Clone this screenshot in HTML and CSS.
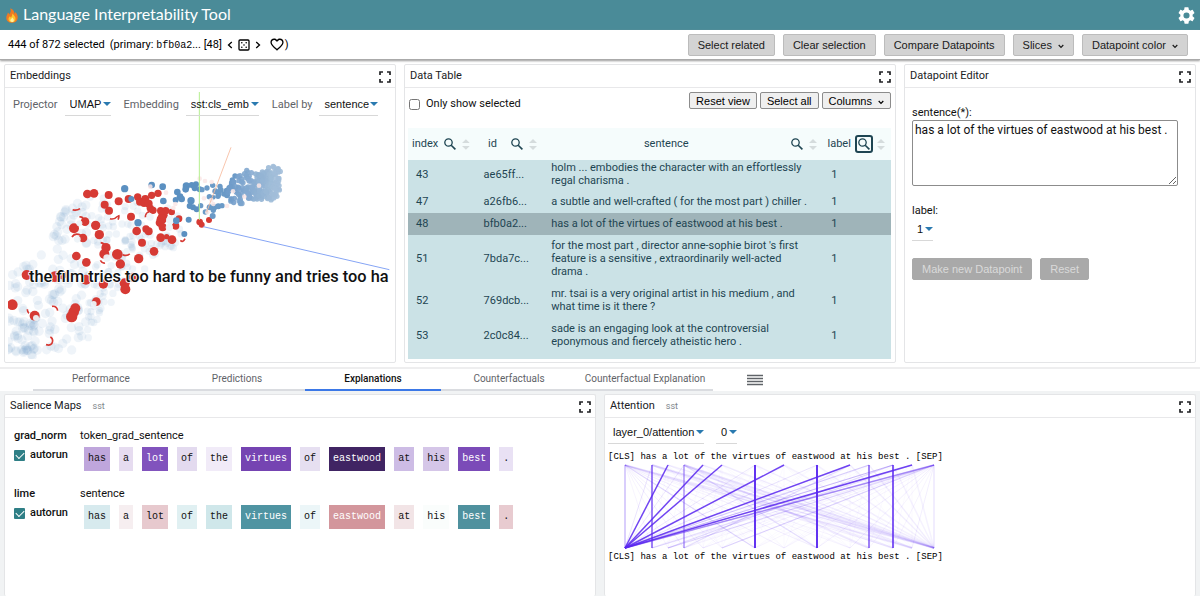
FILE: index.html
```html
<!DOCTYPE html>
<html lang="en">
<head>
<meta charset="utf-8">
<title>Language Interpretability Tool</title>
<link rel="stylesheet" href="styles.css">
</head>
<body>
<svg class="defs" aria-hidden="true">
  <symbol id="i-full" viewBox="0 0 12 12"><path d="M1 4V1h3M8 1h3v3M11 8v3H8M4 11H1V8" fill="none" stroke="currentColor" stroke-width="1.700"/></symbol>
  <symbol id="i-search" viewBox="0 0 12 12"><circle cx="4.500" cy="4.500" r="3.700" fill="none" stroke="currentColor" stroke-width="1.300"/><path d="M7.200 7.200 11.400 11.400" stroke="currentColor" stroke-width="1.600"/></symbol>
  <symbol id="i-sort" viewBox="0 0 8 12"><path d="M0 5 4 1l4 4zM0 8h8l-4 4z" fill="currentColor"/></symbol>
  <symbol id="i-down" viewBox="0 0 6 5"><path d="M.7 1 3 3.400 5.300 1" fill="none" stroke="currentColor" stroke-width="1.200"/></symbol>
</svg>

<header class="topbar">
  <svg class="flame" viewBox="0 0 12 15"><path d="M4.200.3C7.500 1.500 8.500 4 8.400 5.800 9 5.400 9.300 4.800 9.300 4.100 11 5.800 12 8 11.700 10.200 11.300 13.100 9 14.800 6 14.800S.5 13 .3 10.200C.1 7.800 1.500 6.600 1.900 4.600c.7.500 1.100 1.100 1.300 1.800C4.800 4.800 5.200 2.500 4.200.3z" fill="#ef7a22"/><path d="M6.200 5.500C8.600 7.500 9.700 9.300 9.500 11.200 9.300 13.200 7.800 14.200 6 14.200S2.500 13.100 2.500 11.200c0-1.300.8-2 1.300-2.900.5.400.7.800.9 1.300C5.900 8.500 6.500 7 6.200 5.500z" fill="#fdc62f"/><path d="M6.200 9.500c1.300 1.200 1.700 2 1.600 2.900-.1 1-.8 1.500-1.700 1.500s-1.800-.6-1.800-1.600c0-1.100 1.600-1.500 1.900-2.800z" fill="#fff0a0"/></svg>
  <h1>Language Interpretability Tool</h1>
  <button class="icon gear" aria-label="Settings"><svg viewBox="2 2 20 20"><path fill="currentColor" d="M19.140 12.940c.040-.3.060-.61.060-.940 0-.320-.020-.640-.070-.940l2.030-1.580a.49.49 0 0 0 .120-.610l-1.920-3.320a.488.488 0 0 0-.590-.220l-2.390.960c-.5-.380-1.030-.7-1.620-.940l-.360-2.540a.484.484 0 0 0-.480-.410h-3.840c-.240 0-.430.170-.470.410l-.360 2.540c-.590.240-1.130.570-1.620.940l-2.390-.960c-.220-.080-.470 0-.590.220L2.740 8.870c-.120.210-.080.470.120.610l2.030 1.580c-.050.3-.090.630-.090.940s.020.640.070.940l-2.030 1.580a.49.49 0 0 0-.120.610l1.920 3.320c.120.220.370.290.590.220l2.390-.960c.5.380 1.030.7 1.620.940l.360 2.540c.050.240.240.410.480.410h3.840c.240 0 .440-.170.470-.410l.360-2.540c.590-.240 1.130-.560 1.620-.940l2.390.960c.220.080.470 0 .590-.220l1.920-3.320c.120-.220.070-.470-.120-.610l-2.010-1.580zM12 15.600A3.600 3.600 0 1 1 12 8.400a3.600 3.600 0 0 1 0 7.200z"/></svg></button>
</header>

<div class="toolbar">
  <div class="selection">
    <span>444 of 872 selected</span>
    <span class="primary">(primary: <code>bfb0a2</code>... [48]</span>
    <button class="icon" aria-label="Previous"><svg class="chev" viewBox="0 0 6 8"><path d="M4.800 1 1.500 4l3.300 3" fill="none" stroke="currentColor" stroke-width="1.300"/></svg></button>
    <button class="icon" aria-label="Random"><svg class="dice" viewBox="0 0 12 12"><rect x="1" y="1" width="10" height="10" rx="1" fill="none" stroke="currentColor" stroke-width="1.300"/><g fill="currentColor"><circle cx="3.800" cy="3.800" r=".8"/><circle cx="8.200" cy="3.800" r=".8"/><circle cx="6" cy="6" r=".8"/><circle cx="3.800" cy="8.200" r=".8"/><circle cx="8.200" cy="8.200" r=".8"/></g></svg></button>
    <button class="icon" aria-label="Next"><svg class="chev" viewBox="0 0 6 8"><path d="M1.200 1 4.500 4 1.200 7" fill="none" stroke="currentColor" stroke-width="1.300"/></svg></button>
    <span class="fav"><button class="icon" aria-label="Favorite"><svg class="heart" viewBox="1.400 2.400 21.200 19.200"><path fill="currentColor" d="M16.500 3c-1.740 0-3.410.81-4.500 2.090C10.910 3.810 9.240 3 7.500 3 4.420 3 2 5.420 2 8.500c0 3.780 3.400 6.860 8.550 11.540L12 21.350l1.450-1.320C18.600 15.360 22 12.280 22 8.500 22 5.420 19.580 3 16.500 3zm-4.400 15.550-.1.100-.1-.100C7.140 14.240 4 11.390 4 8.500 4 6.500 5.500 5 7.500 5c1.540 0 3.040.99 3.570 2.360h1.870C13.460 5.990 14.960 5 16.500 5c2 0 3.500 1.500 3.500 3.500 0 2.890-3.140 5.740-7.900 10.050z"/></svg></button>)</span>
  </div>
  <div class="actions">
    <button class="btn">Select related</button>
    <button class="btn">Clear selection</button>
    <button class="btn">Compare Datapoints</button>
    <button class="btn">Slices <svg><use href="#i-down"/></svg></button>
    <button class="btn">Datapoint color <svg><use href="#i-down"/></svg></button>
  </div>
</div>

<main class="upper">
  <section class="panel embeddings">
    <div class="panel-head"><h2>Embeddings</h2><button class="icon full" aria-label="Expand"><svg><use href="#i-full"/></svg></button></div>
    <div class="panel-body">
      <svg class="plot" id="plot" viewBox="24 -84 1149 801" preserveAspectRatio="xMinYMin meet" role="img" aria-label="Embedding projection"></svg>
      <div class="controls">
        <div class="field"><label for="proj">Projector</label><span class="sel"><select id="proj"><option>UMAP</option></select></span></div>
        <div class="field"><label for="emb">Embedding</label><span class="sel"><select id="emb"><option>sst:cls_emb</option></select></span></div>
        <div class="field"><label for="lab">Label by</label><span class="sel"><select id="lab"><option>sentence</option></select></span></div>
      </div>
    </div>
  </section>

  <section class="panel data">
    <div class="panel-head"><h2>Data Table</h2><button class="icon full" aria-label="Expand"><svg><use href="#i-full"/></svg></button></div>
    <div class="panel-body">
      <div class="table-bar">
        <label class="only"><input type="checkbox"> Only show selected</label>
        <div class="table-actions">
          <button class="small">Reset view</button>
          <button class="small">Select all</button>
          <button class="small">Columns <svg><use href="#i-down"/></svg></button>
        </div>
      </div>
      <div class="table-wrap">
        <table>
          <colgroup><col class="c-short"><col class="c-short"><col class="c-long"><col class="c-short"></colgroup>
          <thead><tr>
            <th><div class="th"><span>index</span><button class="icon" aria-label="Search index"><svg><use href="#i-search"/></svg></button><svg class="sort"><use href="#i-sort"/></svg></div></th>
            <th><div class="th"><span>id</span><button class="icon" aria-label="Search id"><svg><use href="#i-search"/></svg></button><svg class="sort"><use href="#i-sort"/></svg></div></th>
            <th><div class="th"><span>sentence</span><button class="icon" aria-label="Search sentence"><svg><use href="#i-search"/></svg></button><svg class="sort"><use href="#i-sort"/></svg></div></th>
            <th><div class="th"><span>label</span><button class="icon focused" aria-label="Search label"><svg><use href="#i-search"/></svg></button><svg class="sort"><use href="#i-sort"/></svg></div></th>
          </tr></thead>
          <tbody>
            <tr class="cut"><td>43</td><td>ae65ff...</td><td>holm ... embodies the character with an effortlessly regal charisma .</td><td>1</td></tr>
            <tr><td>47</td><td>a26fb6...</td><td>a subtle and well-crafted ( for the most part ) chiller .</td><td>1</td></tr>
            <tr class="picked"><td>48</td><td>bfb0a2...</td><td>has a lot of the virtues of eastwood at his best .</td><td>1</td></tr>
            <tr><td>51</td><td>7bda7c...</td><td>for the most part , director anne-sophie birot 's first feature is a sensitive , extraordinarily well-acted drama .</td><td>1</td></tr>
            <tr><td>52</td><td>769dcb...</td><td>mr. tsai is a very original artist in his medium , and what time is it there ?</td><td>1</td></tr>
            <tr><td>53</td><td>2c0c84...</td><td>sade is an engaging look at the controversial eponymous and fiercely atheistic hero .</td><td>1</td></tr>
          </tbody>
        </table>
      </div>
    </div>
  </section>

  <section class="panel editor">
    <div class="panel-head"><h2>Datapoint Editor</h2><button class="icon full" aria-label="Expand"><svg><use href="#i-full"/></svg></button></div>
    <div class="panel-body">
      <label for="sent">sentence(*):</label>
      <textarea id="sent">has a lot of the virtues of eastwood at his best .</textarea>
      <label for="lbl">label:</label>
      <span class="sel"><select id="lbl"><option>1</option></select></span>
      <div class="editor-actions"><button class="btn" disabled>Make new Datapoint</button><button class="btn" disabled>Reset</button></div>
    </div>
  </section>
</main>

<nav class="tabs">
  <div class="tablist" role="tablist">
    <button role="tab">Performance</button>
    <button role="tab">Predictions</button>
    <button role="tab" aria-selected="true">Explanations</button>
    <button role="tab">Counterfactuals</button>
    <button role="tab">Counterfactual Explanation</button>
  </div>
  <button class="icon menu" aria-label="Menu"><svg viewBox="0 0 16 12"><path d="M0 1.500h16M0 4.500h16M0 7.500h16M0 10.500h16" stroke="currentColor" stroke-width="1.300"/></svg></button>
</nav>

<main class="lower">
  <section class="panel salience">
    <div class="panel-head"><h2>Salience Maps</h2><small>sst</small><button class="icon full" aria-label="Expand"><svg><use href="#i-full"/></svg></button></div>
    <div class="panel-body">
      <div class="method">
        <div class="method-side"><strong>grad_norm</strong><label><input type="checkbox" class="tick" checked> autorun</label></div>
        <div class="method-main"><div>token_grad_sentence</div><div class="tokens" id="grad"></div></div>
      </div>
      <div class="method">
        <div class="method-side"><strong>lime</strong><label><input type="checkbox" class="tick" checked> autorun</label></div>
        <div class="method-main"><div>sentence</div><div class="tokens" id="lime"></div></div>
      </div>
    </div>
  </section>
  <section class="panel attention">
    <div class="panel-head"><h2>Attention</h2><small>sst</small><button class="icon full" aria-label="Expand"><svg><use href="#i-full"/></svg></button></div>
    <div class="panel-body">
      <div class="controls">
        <span class="sel"><select aria-label="Attention layer"><option>layer_0/attention</option></select></span>
        <span class="sel"><select aria-label="Attention head"><option>0</option></select></span>
      </div>
      <div class="att-text">[CLS] has a lot of the virtues of eastwood at his best . [SEP]</div>
      <svg class="att" id="att" viewBox="0 0 336 86"></svg>
      <div class="att-text">[CLS] has a lot of the virtues of eastwood at his best . [SEP]</div>
    </div>
  </section>
</main>
<script src="app.js"></script>
</body>
</html>
```
FILE: styles.css
```css
* { box-sizing: border-box; }
body { margin: 0; min-height: 100vh; display: flex; flex-direction: column; font: 11px/14px Roboto, sans-serif; color: #202124; background: #fff; }
h1, h2 { margin: 0; font-weight: 400; }
button, select, input, textarea { font: inherit; color: inherit; margin: 0; }
.defs { display: none; }
.icon { border: 0; padding: 0; background: none; display: inline-flex; align-items: center; justify-content: center; }

.topbar { display: flex; align-items: center; height: 30px; padding: 0 5px 0 6px; gap: 5px; background: #4a8b98; color: #fff; }
.topbar h1 { flex: 1; font: 16px/18px Lato, sans-serif; padding-bottom: 2px; }
.flame { width: 12px; height: 15px; }
.gear svg { width: 17px; height: 17px; }

.toolbar { display: flex; align-items: center; justify-content: space-between; height: 30px; padding: 0 12px 0 8px; border-bottom: 1px solid #aaa; box-shadow: 0 1px 2px #999; position: relative; z-index: 1; background: #fff; color: #000; }
.selection, .actions { display: flex; align-items: center; }
.selection { gap: 5px; }
.selection code { font: 10px "Liberation Mono", monospace; }
.chev { width: 6px; height: 8px; }
.dice { width: 12px; height: 12px; }
.fav { display: flex; align-items: center; gap: 1px; margin-left: 4px; }
.heart { width: 14px; height: 13px; }
.actions { gap: 8px; }
.btn { height: 22px; padding: 0 9px; border: 1px solid #bcbcbc; border-radius: 2px; background: #d3d3d3; font-family: "Liberation Sans", sans-serif; color: #1a1a1a; white-space: nowrap; }
.btn svg, .small svg { width: 6px; height: 5px; margin-left: 3px; }
.btn:disabled { background: #a9a9a9; border-color: #a9a9a9; color: #dadada; }

.upper, .lower { display: grid; }
.upper { grid-template-columns: 4fr 5fr 3fr; padding-top: 4px; border-bottom: 2px solid #eeeeef; }
.lower { grid-template-columns: 1fr 1fr; flex: 1; background: #f1f3f4; padding-top: 3px; }
.panel { margin: 0 4px 4px; border: 1px solid #e4e5e7; border-radius: 2px; background: #fff; display: flex; flex-direction: column; min-width: 0; }
.lower .panel { margin-bottom: 0; border-bottom: 0; }
.panel-head { display: flex; align-items: center; height: 23px; padding: 0 4px 0 5px; border-bottom: 1px solid #e8e8ea; }
.panel-head h2 { font-size: 11px; }
.panel-head small { font-size: 9px; color: #80868b; margin-left: 11px; }
.full { margin-left: auto; padding-top: 2px; }
.full svg { width: 12px; height: 12px; }
.panel-body { flex: 1; position: relative; }

.sel { position: relative; display: inline-flex; border-bottom: 1px solid #d8d8d8; font-family: "Liberation Sans", sans-serif; color: #111; }
.sel select { appearance: none; border: 0; background: none; height: 22px; padding: 0 9px 0 5px; font-size: 11px; }
.sel::after { content: ""; position: absolute; right: 0; top: 9px; border: 4px solid transparent; border-top-color: #2a7ab0; border-bottom: 0; pointer-events: none; }

.embeddings .controls { position: relative; display: flex; gap: 13px; padding: 5px 8px; color: #5f6368; }
.field { display: flex; align-items: center; gap: 7px; }
.plot { position: absolute; left: 3px; top: 4px; width: calc(100% - 7px); }
.plot text { font: 500 49px Roboto, sans-serif; fill: #111; stroke: #fff; stroke-width: 5px; paint-order: stroke; }

.data .panel-body { padding: 0 4px 3px 3px; }
.table-bar { display: flex; justify-content: space-between; height: 40px; padding: 4px 0 0 1px; }
.only { display: flex; align-items: center; gap: 6px; height: 24px; color: #111; }
.only input { width: 11px; height: 11px; }
.table-actions { display: flex; gap: 3px; align-items: flex-start; }
.small { height: 17px; padding: 0 6px; border: 1px solid #8c8c8c; border-radius: 2px; background: #efefef; font-family: "Liberation Sans", sans-serif; line-height: 14px; color: #000; white-space: nowrap; }
.table-wrap { background: #cbe2e6; padding-bottom: 6px; color: #1e4552; }
table { width: 100%; table-layout: fixed; border-collapse: collapse; }
.c-short { width: 14%; }
.c-long { width: 58%; }
th { height: 32px; padding: 0; background: #f5fcfc; font-weight: 400; }
.th { display: flex; align-items: center; gap: 4px; padding: 0 6px 0 4px; }
.th span { flex: 1; text-align: center; }
.th .icon { width: 16px; }
.th .icon svg { width: 12px; height: 12px; }
.th .focused { width: 18px; height: 18px; border: 2px solid #1e4552; border-radius: 3px; }
.sort { width: 8px; height: 12px; color: #d5dcdd; }
td { padding: 4px 14px 5px 8px; line-height: 13px; }
.cut td { padding-top: 1px; padding-bottom: 4px; }
td:nth-child(-n+2) { padding-right: 0; }
.picked { background: #9fb4b9; }

.editor .panel-body { display: flex; flex-direction: column; align-items: flex-start; padding: 18px 17px 0 7px; color: #111; }
textarea { width: 100%; height: 66px; margin: 0 0 18px; padding: 2px; border: 1px solid #8c8c8c; border-radius: 2px; font-size: 12px; background: #fff; }
.editor-actions { display: flex; gap: 8px; margin-top: 17px; }

.tabs { display: flex; align-items: center; height: 22px; padding-left: 33px; }
.tablist { display: grid; grid-template-columns: repeat(5, 136px); height: 22px; }
.tablist button { border: 0; border-bottom: 2px solid #dadce0; background: none; padding: 0; font-size: 10px; color: #5f6368; white-space: nowrap; }
.tablist [aria-selected] { border-color: #3b78e7; color: #111; font-weight: 500; }
.menu { margin-left: 34px; color: #5f6368; }
.menu svg { width: 16px; height: 12px; }

.salience .panel-body { padding: 11px 9px; display: flex; flex-direction: column; gap: 16px; color: #111; }
.method { display: flex; }
.method-side { width: 66px; display: flex; flex-direction: column; gap: 5px; }
.method-side strong { font-weight: 500; }
.method-side label { display: flex; align-items: center; gap: 5px; font-weight: 500; }
.tick { appearance: none; width: 11px; height: 11px; border-radius: 1px; background: #2f7f86; display: grid; place-items: center; }
.tick::after { content: ""; width: 7px; height: 4px; border: solid #fff; border-width: 0 0 1px 1px; rotate: -45deg; margin-bottom: 2px; }
.method-main { display: flex; flex-direction: column; gap: 4px; }
.tokens { display: flex; gap: 9px; padding-left: 4px; }
.tokens span { height: 24px; padding: 0 4px; font: 10px/24px "Liberation Mono", monospace; white-space: pre; }

.attention .panel-body { padding: 3px; }
.attention .controls { display: flex; gap: 12px; }
.att-text { font: 9px/14px "Liberation Mono", monospace; color: #000; margin-top: 6px; white-space: nowrap; }
.att { display: block; width: 336px; height: 86px; }
.att + .att-text { margin-top: 0; }
```
FILE: app.js
```js
const NS = 'http://www.w3.org/2000/svg';
function add(parent, tag, attrs) {
  const el = document.createElementNS(NS, tag);
  for (const k in attrs) el.setAttribute(k, attrs[k]);
  parent.appendChild(el);
  return el;
}
let seed = 7;
const rnd = () => (seed = (seed * 16807) % 2147483647) / 2147483647;
function inside(x, y, p) {
  let r = false;
  for (let i = 0, j = p.length - 1; i < p.length; j = i++) {
    const [a, b] = p[i], [c, d] = p[j];
    if ((b > y) !== (d > y) && x < (c - a) * (y - b) / (d - b) + a) r = !r;
  }
  return r;
}
function cloud(poly, n, draw) {
  const xs = poly.map(p => p[0]), ys = poly.map(p => p[1]);
  const x0 = Math.min(...xs), x1 = Math.max(...xs), y0 = Math.min(...ys), y1 = Math.max(...ys);
  while (n) {
    const x = x0 + rnd() * (x1 - x0), y = y0 + rnd() * (y1 - y0);
    if (inside(x, y, poly)) { draw(x, y); n--; }
  }
}
const plot = document.getElementById('plot');
const dot = (x, y, r, fill, o = 1) => add(plot, 'circle', { cx: x, cy: y, r, fill, opacity: o });

const pale = (x, y) => dot(x, y, x < 260 ? 14 : 11, '#5f96c4', .1);
cloud([[24,470],[80,430],[130,425],[190,440],[330,440],[400,440],[370,530],[310,560],[290,620],[230,690],[190,700],[150,690],[110,712],[24,712]], 150, pale);
cloud([[24,570],[120,590],[100,712],[24,712]], 28, pale);
cloud([[150,350],[185,275],[230,225],[340,232],[450,225],[530,270],[545,340],[520,380],[400,440],[200,440]], 125, pale);
[[124,405],[78,436],[175,418],[160,350],[434,447],[495,380],[520,383],[215,690],[235,653],[265,653]].forEach(p => pale(...p));

[[262,222,13],[282,220,13],[326,225,12],[314,254,12],[327,272,12],[356,244,12],[386,237,12],[393,290,12],[255,305,13],[287,316,14],[222,325,15],[298,344,14],[249,354,13],[229,408,13],[259,427,13],[318,383,14],[313,402,15],[352,403,16],[361,432,14],[410,333,13],[426,368,12],[416,416,14],[462,394,13],[438,327,11],[446,334,12],[80,465,15],[164,470,16],[187,465,13],[258,479,15],[310,492,14],[374,490,15],[376,508,15],[398,472,14],[37,554,16],[104,587,15],[226,565,15],[221,576,16],[215,590,17],[289,545,13],[474,220,11],[455,226,11],[413,231,11],[420,245,12],[436,237,12],[432,250,11],[446,251,12],[451,265,11],[459,271,11],[482,272,11],[497,272,11],[515,276,10],[489,286,14],[485,298,15],[480,308,13],[488,322,12],[482,353,13],[516,359,13],[500,350,8],[527,318,11],[537,296,10],[599,306,10],[605,314,9],[627,300,9]].forEach(([x, y, r]) => dot(x, y, r, '#d63a34'));

const arcs = 'M218 269q12 4 22-3M238 291q12-2 12 10M330 296q12 4 24-8M354 299q4-8 2-14M368 404q14 6 21-3M301 421q6 10 14 8M302 368q12 2 16 12M216 351q8-14 26-6M156 559q14-2 17 13M82 568q0 9 5 12M138 674q18 5 20-11q0-9-7-12M436 292q0-14 14-18M541 361q8 8 14-5';
add(plot, 'path', { d: arcs, fill: 'none', stroke: '#d63a34', 'stroke-width': 5 });
[[238,310,9],[232,358,10],[321,414,11],[380,393,9],[108,594,9],[511,300,13],[508,322,11],[448,286,8],[281,552,9]].forEach(([x, y, r]) => dot(x, y, r, '#edf3f8', .95));

const blues = [[374,206,11],[455,195,10],[488,200,10],[490,243,10],[394,237,9],[414,308,11],[566,299,9],[553,342,9],[529,302,10],[638,288,9],[532,216,10],[540,230,10],[559,198,11],[557,208,10],[575,195,9],[588,193,9],[584,205,9],[599,208,9],[545,237,10],[527,240,9],[573,242,11],[569,258,9],[579,262,9],[590,268,9],[602,257,8],[606,209,8],[621,204,8],[638,196,8],[628,230,8],[646,214,9],[656,222,9],[662,210,9],[660,199,8],[672,222,8],[680,212,9],[640,232,7],[654,229,8],[629,262,9],[642,262,10],[655,259,9],[666,257,8],[616,276,8],[640,271,8],[681,226,9],[688,204,9],[695,192,8],[697,180,8],[705,168,8]];
blues.forEach(([x, y, r]) => dot(x, y, r, x < 600 ? '#5b90c1' : '#6b9ac7'));
const far = (x, y) => { const t = Math.max(0, Math.min(1, (x - 690) / 130)); dot(x, y, 8, `rgb(${112 + 50 * t | 0},${156 + 34 * t | 0},${202 + 15 * t | 0})`, .9); };
cloud([[692,185],[712,160],[745,148],[778,160],[780,235],[735,252],[690,248],[680,220]], 95, far);
cloud([[775,162],[800,144],[824,132],[842,146],[836,190],[842,215],[825,242],[775,238]], 115, far);
[[498,218],[526,252],[599,176],[615,183],[635,186],[634,240],[640,252],[681,258],[699,214],[777,197],[451,200],[612,235],[622,277],[733,230],[520,264]].forEach(([x, y]) => dot(x, y, 7, '#fae6e6', .85));

add(plot, 'path', { d: 'M598-84V300', stroke: '#b5ee90', 'stroke-width': 3 });
add(plot, 'path', { d: 'M693 82 620 276', stroke: '#f7b99c', 'stroke-width': 2.5 });
add(plot, 'path', { d: 'M610 320 1168 449', stroke: '#86a5f5', 'stroke-width': 3 });
add(plot, 'text', { x: 87, y: 487 }).textContent = 'the film tries too hard to be funny and tries too ha';

const words = ['has', 'a', 'lot', 'of', 'the', 'virtues', 'of', 'eastwood', 'at', 'his', 'best', '.'];
const shades = {
  grad: ['#bfa6dc', '#e6dcf0', '#8153bd', '#e3daef', '#f1ebf8', '#7544b2', '#e6dff1', '#402463', '#cdbce5', '#d5c6e8', '#7b4bb8', '#e9e1f4'],
  lime: ['#d7eaee', '#f6eef0', '#e7c9ce', '#e0f0f2', '#cfe7ea', '#4f94a2', '#ecf6f8', '#d3969c', '#f2e4e6', '#fafdfc', '#4f919e', '#e8cbd0']
};
const light = { grad: [2, 5, 7, 10], lime: [5, 7, 10] };
for (const id in shades) {
  words.forEach((w, i) => {
    const s = document.createElement('span');
    s.textContent = w;
    s.style.background = shades[id][i];
    s.style.color = light[id].includes(i) ? '#fff' : '#111';
    document.getElementById(id).appendChild(s);
  });
}

const att = document.getElementById('att');
const X = [17, 44, 60, 76, 95, 114, 147, 176, 209, 242, 261, 285, 304, 326];
const line = (a, b, o, w = 1) => add(att, 'line', { x1: X[a], y1: 1, x2: X[b], y2: 84, stroke: '#5a28f0', 'stroke-opacity': o, 'stroke-width': w });
X.forEach((_, a) => X.forEach((_, b) => { if ((a * 5 + b * 3) % 4 < 2) line(a, b, .025); }));
X.forEach((_, a) => { line(a, 13, .06, 1.5); line(0, a, .05); line(13, a, .05); line(a, 0, .1); });
[[3, 13], [1, 13], [3, 12], [1, 11], [0, 12], [3, 10]].forEach(([a, b]) => line(a, b, .08, 2));
[[13, 5], [13, 2], [12, 1], [10, 0], [9, 3], [0, 6], [3, 8], [11, 2]].forEach(([a, b]) => line(a, b, .15, 1.2));
line(0, 0, .2, 1.5); line(3, 3, .45, 1.6); line(1, 1, .65, 1.8); line(10, 10, .65, 1.8); line(11, 11, .85, 1.8); line(6, 6, .95, 2); line(8, 8, .95, 2);
[2, 4, 5, 7, 9, 12].forEach(a => line(a, 0, .85, 1.5));
line(13, 0, .45, 1.5); line(11, 0, .25);
```
